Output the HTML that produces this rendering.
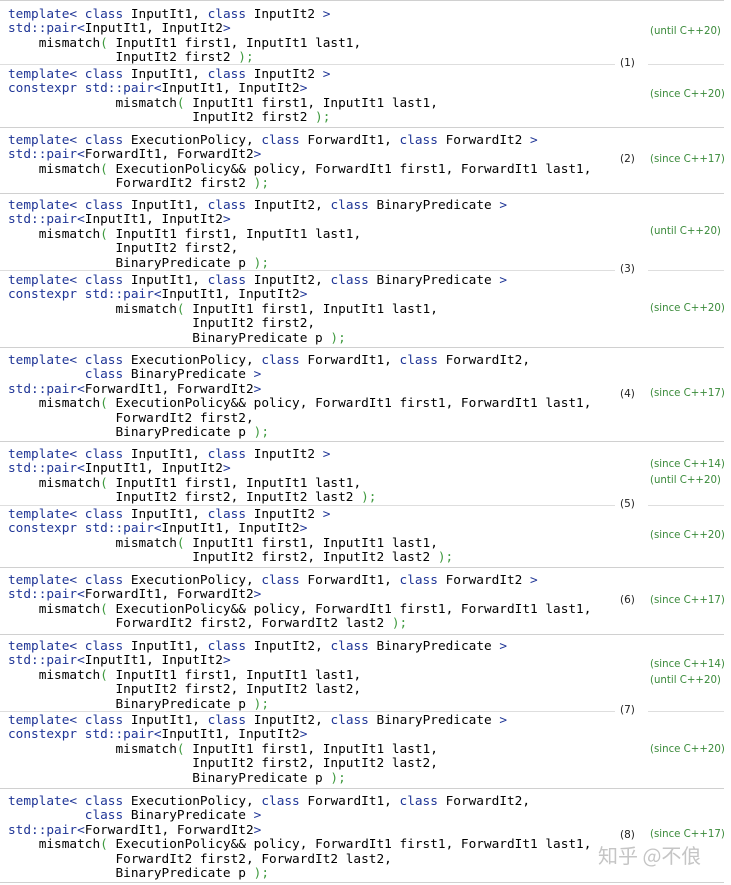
<!DOCTYPE html>
<html><head><meta charset="utf-8"><style>
html,body{margin:0;padding:0;background:#fff;width:731px;height:885px;overflow:hidden;position:relative}
pre{position:absolute;left:8px;margin:0;margin-top:1.5px;font-family:"DejaVu Sans Mono","Liberation Mono",monospace;font-size:12.75px;line-height:14.5px;color:#000;white-space:pre}
.k{color:#1f3596}.g{color:#3f9a3f}
.h{position:absolute;left:0;width:724px;height:1px;background:#d0d0d0}
.hl{position:absolute;left:0;width:615px;height:1px;background:#dedede}
.hr{position:absolute;left:648px;width:76px;height:1px;background:#dedede}
.n{position:absolute;left:620px;font-family:"DejaVu Sans",sans-serif;font-size:10.5px;color:#222;line-height:12px}
.v{position:absolute;left:650px;font-family:"DejaVu Sans",sans-serif;font-size:10.2px;color:#3a8a3a;line-height:16px;white-space:nowrap}
.wm{position:absolute;left:598px;top:840px;font-family:"Noto Sans CJK SC",sans-serif;font-size:20px;color:rgba(150,150,150,0.55);white-space:nowrap}
</style></head><body>
<div class="h" style="top:0"></div>
<pre style="top:6px"><span class="k">template&lt;</span> <span class="k">class</span> InputIt1, <span class="k">class</span> InputIt2 <span class="k">&gt;</span>
<span class="k">std::pair&lt;</span>InputIt1, InputIt2<span class="k">&gt;</span>
    mismatch<span class="g">(</span> InputIt1 first1, InputIt1 last1,
              InputIt2 first2 <span class="g">);</span></pre>
<div class="hl" style="top:64px"></div><div class="hr" style="top:64px"></div>
<pre style="top:66px"><span class="k">template&lt;</span> <span class="k">class</span> InputIt1, <span class="k">class</span> InputIt2 <span class="k">&gt;</span>
<span class="k">constexpr</span> <span class="k">std::pair&lt;</span>InputIt1, InputIt2<span class="k">&gt;</span>
              mismatch<span class="g">(</span> InputIt1 first1, InputIt1 last1,
                        InputIt2 first2 <span class="g">);</span></pre>
<div class="n" style="top:57px">(1)</div>
<div class="v" style="top:24px">(until C++20)</div>
<div class="v" style="top:87px">(since C++20)</div>
<div class="h" style="top:127px"></div>

<pre style="top:132px"><span class="k">template&lt;</span> <span class="k">class</span> ExecutionPolicy, <span class="k">class</span> ForwardIt1, <span class="k">class</span> ForwardIt2 <span class="k">&gt;</span>
<span class="k">std::pair&lt;</span>ForwardIt1, ForwardIt2<span class="k">&gt;</span>
    mismatch<span class="g">(</span> ExecutionPolicy&amp;&amp; policy, ForwardIt1 first1, ForwardIt1 last1,
              ForwardIt2 first2 <span class="g">);</span></pre>
<div class="n" style="top:153px">(2)</div>
<div class="v" style="top:152px">(since C++17)</div>
<div class="h" style="top:193px"></div>

<pre style="top:197px"><span class="k">template&lt;</span> <span class="k">class</span> InputIt1, <span class="k">class</span> InputIt2, <span class="k">class</span> BinaryPredicate <span class="k">&gt;</span>
<span class="k">std::pair&lt;</span>InputIt1, InputIt2<span class="k">&gt;</span>
    mismatch<span class="g">(</span> InputIt1 first1, InputIt1 last1,
              InputIt2 first2,
              BinaryPredicate p <span class="g">);</span></pre>
<div class="hl" style="top:270px"></div><div class="hr" style="top:270px"></div>
<pre style="top:272px"><span class="k">template&lt;</span> <span class="k">class</span> InputIt1, <span class="k">class</span> InputIt2, <span class="k">class</span> BinaryPredicate <span class="k">&gt;</span>
<span class="k">constexpr</span> <span class="k">std::pair&lt;</span>InputIt1, InputIt2<span class="k">&gt;</span>
              mismatch<span class="g">(</span> InputIt1 first1, InputIt1 last1,
                        InputIt2 first2,
                        BinaryPredicate p <span class="g">);</span></pre>
<div class="n" style="top:263px">(3)</div>
<div class="v" style="top:224px">(until C++20)</div>
<div class="v" style="top:301px">(since C++20)</div>
<div class="h" style="top:347px"></div>

<pre style="top:352px"><span class="k">template&lt;</span> <span class="k">class</span> ExecutionPolicy, <span class="k">class</span> ForwardIt1, <span class="k">class</span> ForwardIt2,
          <span class="k">class</span> BinaryPredicate <span class="k">&gt;</span>
<span class="k">std::pair&lt;</span>ForwardIt1, ForwardIt2<span class="k">&gt;</span>
    mismatch<span class="g">(</span> ExecutionPolicy&amp;&amp; policy, ForwardIt1 first1, ForwardIt1 last1,
              ForwardIt2 first2,
              BinaryPredicate p <span class="g">);</span></pre>
<div class="n" style="top:388px">(4)</div>
<div class="v" style="top:386px">(since C++17)</div>
<div class="h" style="top:441px"></div>

<pre style="top:446px"><span class="k">template&lt;</span> <span class="k">class</span> InputIt1, <span class="k">class</span> InputIt2 <span class="k">&gt;</span>
<span class="k">std::pair&lt;</span>InputIt1, InputIt2<span class="k">&gt;</span>
    mismatch<span class="g">(</span> InputIt1 first1, InputIt1 last1,
              InputIt2 first2, InputIt2 last2 <span class="g">);</span></pre>
<div class="hl" style="top:505px"></div><div class="hr" style="top:505px"></div>
<pre style="top:506px"><span class="k">template&lt;</span> <span class="k">class</span> InputIt1, <span class="k">class</span> InputIt2 <span class="k">&gt;</span>
<span class="k">constexpr</span> <span class="k">std::pair&lt;</span>InputIt1, InputIt2<span class="k">&gt;</span>
              mismatch<span class="g">(</span> InputIt1 first1, InputIt1 last1,
                        InputIt2 first2, InputIt2 last2 <span class="g">);</span></pre>
<div class="n" style="top:498px">(5)</div>
<div class="v" style="top:457px">(since C++14)</div>
<div class="v" style="top:473px">(until C++20)</div>
<div class="v" style="top:528px">(since C++20)</div>
<div class="h" style="top:567px"></div>

<pre style="top:572px"><span class="k">template&lt;</span> <span class="k">class</span> ExecutionPolicy, <span class="k">class</span> ForwardIt1, <span class="k">class</span> ForwardIt2 <span class="k">&gt;</span>
<span class="k">std::pair&lt;</span>ForwardIt1, ForwardIt2<span class="k">&gt;</span>
    mismatch<span class="g">(</span> ExecutionPolicy&amp;&amp; policy, ForwardIt1 first1, ForwardIt1 last1,
              ForwardIt2 first2, ForwardIt2 last2 <span class="g">);</span></pre>
<div class="n" style="top:594px">(6)</div>
<div class="v" style="top:593px">(since C++17)</div>
<div class="h" style="top:634px"></div>

<pre style="top:638px"><span class="k">template&lt;</span> <span class="k">class</span> InputIt1, <span class="k">class</span> InputIt2, <span class="k">class</span> BinaryPredicate <span class="k">&gt;</span>
<span class="k">std::pair&lt;</span>InputIt1, InputIt2<span class="k">&gt;</span>
    mismatch<span class="g">(</span> InputIt1 first1, InputIt1 last1,
              InputIt2 first2, InputIt2 last2,
              BinaryPredicate p <span class="g">);</span></pre>
<div class="hl" style="top:711px"></div><div class="hr" style="top:711px"></div>
<pre style="top:712px"><span class="k">template&lt;</span> <span class="k">class</span> InputIt1, <span class="k">class</span> InputIt2, <span class="k">class</span> BinaryPredicate <span class="k">&gt;</span>
<span class="k">constexpr</span> <span class="k">std::pair&lt;</span>InputIt1, InputIt2<span class="k">&gt;</span>
              mismatch<span class="g">(</span> InputIt1 first1, InputIt1 last1,
                        InputIt2 first2, InputIt2 last2,
                        BinaryPredicate p <span class="g">);</span></pre>
<div class="n" style="top:704px">(7)</div>
<div class="v" style="top:657px">(since C++14)</div>
<div class="v" style="top:673px">(until C++20)</div>
<div class="v" style="top:742px">(since C++20)</div>
<div class="h" style="top:788px"></div>

<pre style="top:793px"><span class="k">template&lt;</span> <span class="k">class</span> ExecutionPolicy, <span class="k">class</span> ForwardIt1, <span class="k">class</span> ForwardIt2,
          <span class="k">class</span> BinaryPredicate <span class="k">&gt;</span>
<span class="k">std::pair&lt;</span>ForwardIt1, ForwardIt2<span class="k">&gt;</span>
    mismatch<span class="g">(</span> ExecutionPolicy&amp;&amp; policy, ForwardIt1 first1, ForwardIt1 last1,
              ForwardIt2 first2, ForwardIt2 last2,
              BinaryPredicate p <span class="g">);</span></pre>
<div class="n" style="top:829px">(8)</div>
<div class="v" style="top:827px">(since C++17)</div>
<div class="h" style="top:882px"></div>
<div class="wm">知乎 @不俍</div>
</body></html>
